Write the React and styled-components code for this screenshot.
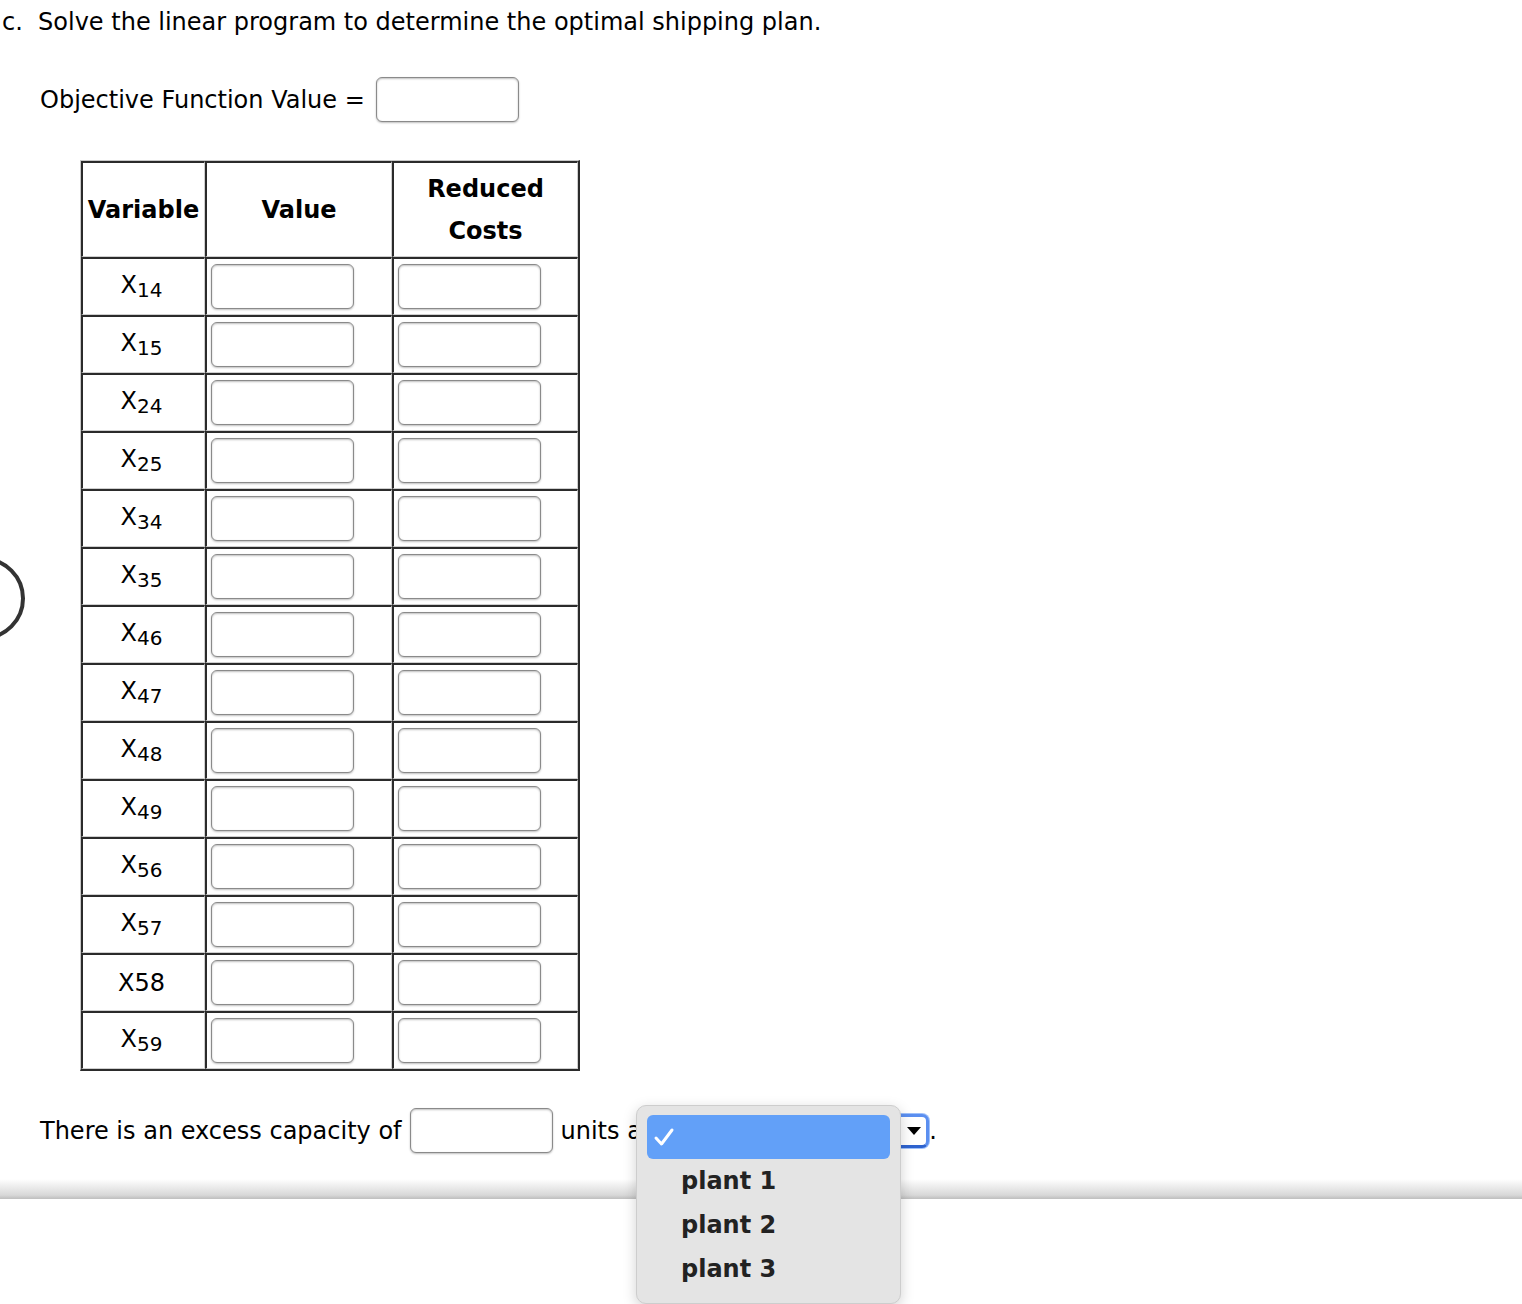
import React from 'react'
import styled, { createGlobalStyle } from 'styled-components'

const GlobalStyle = createGlobalStyle`
  html, body {
    margin: 0;
    padding: 0;
    background: #fff;
  }
  body {
    font-family: "DejaVu Sans", Verdana, sans-serif;
    color: #000;
  }
`

const Page = styled.div`
  position: relative;
  width: 1522px;
  min-height: 1304px;
  padding-top: 7px;
  box-sizing: border-box;
  overflow: hidden;
`

const Question = styled.div`
  font-size: 24px;
  line-height: 30px;
  padding-left: 2px;
`

const Body = styled.div`
  padding-left: 40px;
`

const Line = styled.div`
  position: relative;
  display: flex;
  align-items: center;
  font-size: 24px;
  margin-top: ${p => p.$top || 0}px;
  gap: ${p => p.$gap || 8}px;
`

const AnswerBox = styled.input`
  box-sizing: border-box;
  width: ${p => p.$w || 143}px;
  height: 45px;
  margin: 0;
  border: 1.5px solid #8a8a8a;
  border-radius: 6px;
  background: #fff;
  box-shadow: inset 0 1px 2px rgba(0, 0, 0, 0.25), 0 1px 2px rgba(0, 0, 0, 0.25);
  outline: none;
  font-size: 20px;
`

const Grid = styled.table`
  margin: 38px 0 0 80px;
  width: 497px;
  table-layout: fixed;
  border-collapse: separate;
  border-spacing: 0;
  border-style: solid;
  border-width: 1px 2px 2px 1px;
  border-color: #c9c9c9 #2b2b2b #2b2b2b #c9c9c9;
`

const Cell = styled.td`
  box-sizing: border-box;
  padding: 0 ${p => p.$pad || 4}px;
  border-top: 2px solid #2b2b2b;
  border-left: 2px solid #2b2b2b;
  border-right: 1px solid #cfcfcf;
  border-bottom: 1px solid #cfcfcf;
  vertical-align: middle;
  text-align: ${p => (p.$center ? 'center' : 'left')};
`

const HeadCell = styled.th`
  padding: 0 2px;
  border-top: 2px solid #2b2b2b;
  border-left: 2px solid #2b2b2b;
  border-right: 1px solid #cfcfcf;
  border-bottom: 1px solid #cfcfcf;
  font-size: 24px;
  line-height: 42px;
  font-weight: bold;
  text-align: center;
  vertical-align: middle;
`

const HeadRow = styled.tr`
  height: 96px;
`

const Row = styled.tr`
  height: 58px;
`

const VarName = styled.span`
  font-size: 24px;
  line-height: 1;
  margin-left: -4px;
`

const Sub = styled.sub`
  font-size: 20px;
  vertical-align: -4px;
`

const SelectBox = styled.div`
  position: relative;
  box-sizing: border-box;
  width: 270px;
  height: 34px;
  border: 3px solid #5b8ff0;
  border-bottom-color: #2e63cf;
  border-radius: 7px;
  box-shadow: 0 0 0 1px #9ec0fa;
  background: #fff;
  display: flex;
  align-items: center;
  justify-content: flex-end;
  padding-right: 5px;
`

const Arrow = styled.span`
  width: 0;
  height: 0;
  border-left: 7px solid transparent;
  border-right: 7px solid transparent;
  border-top: 8px solid #000;
`

const Dot = styled.span`
  margin-left: -8px;
`

const Menu = styled.div`
  position: absolute;
  left: 596px;
  top: -3px;
  width: 265px;
  box-sizing: border-box;
  padding: 9px 10px 12px;
  background: #e4e4e4;
  border: 1px solid #cdcdcd;
  border-radius: 10px;
  box-shadow: 0 4px 14px rgba(0, 0, 0, 0.18);
  z-index: 5;
`

const MenuItem = styled.div`
  display: flex;
  align-items: center;
  height: 44px;
  padding-left: 34px;
  border-radius: 6px;
  font-size: 24px;
  font-weight: bold;
  color: #222;
  position: relative;
  background: ${p => (p.$active ? '#62a0f8' : 'transparent')};
`

const Check = styled.svg`
  position: absolute;
  left: 6px;
  top: 12px;
`

const Divider = styled.div`
  margin-top: 26px;
  height: 19px;
  background: linear-gradient(to bottom, rgba(255, 255, 255, 0), #d8d8d8 85%, #c4c4c4);
  border-bottom: 1px solid #c2c2c2;
`

const Ring = styled.div`
  position: absolute;
  left: -58px;
  top: 557px;
  width: 83px;
  height: 83px;
  box-sizing: border-box;
  border: 4px solid #333;
  border-radius: 50%;
`

const vars = ['14', '15', '24', '25', '34', '35', '46', '47', '48', '49', '56', '57', 'X58', '59']

export default function App() {
  return (
    <Page>
      <GlobalStyle />
      <Ring />
      <Question>c.&nbsp; Solve the linear program to determine the optimal shipping plan.</Question>
      <Body>
        <Line $top={40} $gap={11}>
          Objective Function Value =
          <AnswerBox $w={143} />
        </Line>
      </Body>
      <Grid>
        <colgroup>
          <col style={{ width: 124 }} />
          <col style={{ width: 187 }} />
          <col style={{ width: 186 }} />
        </colgroup>
        <thead>
          <HeadRow>
            <HeadCell>Variable</HeadCell>
            <HeadCell>Value</HeadCell>
            <HeadCell>
              Reduced
              <br />
              Costs
            </HeadCell>
          </HeadRow>
        </thead>
        <tbody>
          {vars.map(v => (
            <Row key={v}>
              <Cell $center>
                {v.startsWith('X') ? (
                  <VarName>{v}</VarName>
                ) : (
                  <VarName>
                    X<Sub>{v}</Sub>
                  </VarName>
                )}
              </Cell>
              <Cell $pad={4}>
                <AnswerBox />
              </Cell>
              <Cell $pad={4}>
                <AnswerBox />
              </Cell>
            </Row>
          ))}
        </tbody>
      </Grid>
      <Body>
        <Line $top={37}>
          There is an excess capacity of
          <AnswerBox $w={143} />
          units at
          <SelectBox>
            <Arrow />
          </SelectBox>
          <Dot>.</Dot>
          <Menu>
            <MenuItem $active>
              <Check width="22" height="20" viewBox="0 0 22 20">
                <path d="M3 11 L8.5 17 L19 3" fill="none" stroke="#fff" strokeWidth="3" strokeLinecap="round" strokeLinejoin="round" />
              </Check>
            </MenuItem>
            <MenuItem>plant 1</MenuItem>
            <MenuItem>plant 2</MenuItem>
            <MenuItem>plant 3</MenuItem>
          </Menu>
        </Line>
      </Body>
      <Divider />
    </Page>
  )
}
